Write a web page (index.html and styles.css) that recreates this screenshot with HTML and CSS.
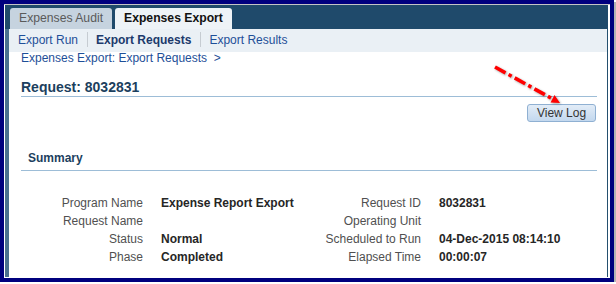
FILE: index.html
```html
<!DOCTYPE html>
<html>
<head>
<meta charset="utf-8">
<link rel="stylesheet" href="styles.css">
</head>
<body>
<div class="frame">
  <div class="app">
    <div class="tabs">
      <div class="tab">Expenses Audit</div>
      <div class="tab active">Expenses Export</div>
    </div>
    <div class="main">
      <div class="subtabs">
        <span class="sub">Export Run</span>
        <span class="sep"></span>
        <span class="sub cur">Export Requests</span>
        <span class="sep"></span>
        <span class="sub">Export Results</span>
      </div>
      <div class="content">
        <div class="crumb">Expenses Export: Export Requests&nbsp; &gt;</div>
        <h1 class="title">Request: 8032831</h1>
        <div class="actions"><button class="btn">View Log</button></div>
        <h2 class="section">Summary</h2>
        <div class="grid">
          <span class="lbl">Program Name</span><span class="val">Expense Report Export</span>
          <span class="lbl">Request ID</span><span class="val">8032831</span>
          <span class="lbl">Request Name</span><span class="val"></span>
          <span class="lbl">Operating Unit</span><span class="val"></span>
          <span class="lbl">Status</span><span class="val">Normal</span>
          <span class="lbl">Scheduled to Run</span><span class="val">04-Dec-2015 08:14:10</span>
          <span class="lbl">Phase</span><span class="val">Completed</span>
          <span class="lbl">Elapsed Time</span><span class="val">00:00:07</span>
        </div>
      </div>
    </div>
  </div>
  <svg class="arrow" width="80" height="52" viewBox="0 0 80 52">
    <line x1="5" y1="7" x2="64" y2="39.7" stroke="#ff0000" stroke-width="3.6" stroke-dasharray="12 3.5 3.5 3.5"/>
    <polygon points="70,43 60.5,42.5 64.5,35" fill="#ff0000"/>
  </svg>
</div>
</body>
</html>
```
FILE: styles.css
```css
html, body {
  margin: 0;
  padding: 0;
  background: #ffffff;
}
body {
  font-family: "Liberation Sans", Arial, sans-serif;
  font-size: 12px;
}
.frame {
  position: relative;
  box-sizing: border-box;
  width: 614px;
  height: 282px;
  border: 4px solid #00007e;
  box-shadow: 2px 2px 0 #b4b4b4, inset 0 1px 0 #c4c4c4;
  padding: 1px 2px 1px 1px;
  background: #ffffff;
}
.app {
  height: 100%;
  display: flex;
  flex-direction: column;
}
.tabs {
  height: 24px;
  box-sizing: border-box;
  background: #1f4a6b;
  padding: 3px 0 0 5px;
  display: flex;
  gap: 3px;
  align-items: flex-end;
}
.tab {
  height: 21px;
  line-height: 21px;
  padding: 0 9px;
  background: #c6d3df;
  color: #5a5a5a;
  font-size: 12.2px;
  border-radius: 3px 3px 0 0;
}
.tab.active {
  background: #eef3f7;
  color: #111111;
  font-weight: bold;
}
.main {
  flex: 1;
  border-left: 4px solid #4a7090;
  border-right: 1px solid #24506f;
  background: #ffffff;
}
.subtabs {
  height: 23px;
  background: #eaf0f5;
  border-top-right-radius: 3px;
  display: flex;
  align-items: center;
  padding-left: 9px;
  padding-bottom: 2px;
  box-sizing: border-box;
}
.sub {
  color: #1e4f98;
  font-size: 12px;
}
.sub.cur {
  color: #1c3a6c;
  font-weight: bold;
}
.sep {
  width: 1px;
  height: 15px;
  background: #c6ccd2;
  margin: 0 8px 0 9px;
}
.content {
  padding: 0 10px 0 12px;
}
.crumb {
  line-height: 13px;
  color: #1e4f98;
  font-size: 12px;
}
.title {
  margin: 13px 0 0 0;
  font-size: 14px;
  line-height: 18px;
  font-weight: bold;
  color: #1c3f5e;
  border-bottom: 1px solid #9dbdd7;
}
.actions {
  display: flex;
  justify-content: flex-end;
  margin-top: 7px;
  padding-right: 1px;
}
.btn {
  width: 69px;
  height: 18px;
  box-sizing: border-box;
  border: 1px solid #8fb0d2;
  border-radius: 3px;
  background: linear-gradient(#e2ecf7, #c3d8ee);
  font-family: "Liberation Sans", Arial, sans-serif;
  font-size: 12px;
  color: #333333;
  padding: 0;
  line-height: 16px;
}
.section {
  margin: 28px 0 0 0;
  padding: 0 0 4px 7px;
  font-size: 12px;
  line-height: 16px;
  font-weight: bold;
  color: #1c3f5e;
  border-bottom: 1px solid #9dbdd7;
}
.grid {
  margin-top: 23px;
  display: grid;
  grid-template-columns: 122px 140px 102px 1fr;
  column-gap: 18px;
  grid-auto-rows: 18px;
  line-height: 18px;
}
.lbl {
  text-align: right;
  color: #505050;
  white-space: nowrap;
}
.val {
  font-weight: bold;
  color: #262626;
  white-space: nowrap;
}
.arrow {
  position: absolute;
  left: 486px;
  top: 56px;
  filter: drop-shadow(1.5px 1.5px 1px rgba(0,0,0,0.35));
}
```
